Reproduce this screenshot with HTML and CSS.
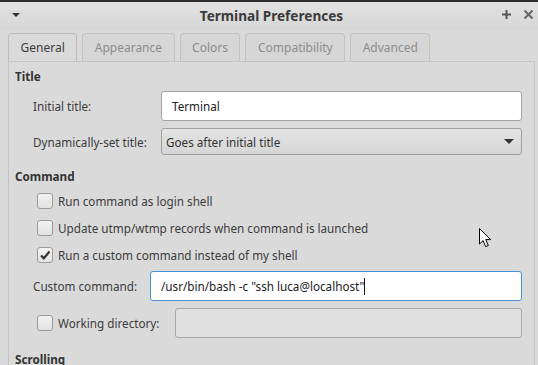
FILE: index.html
```html
<!DOCTYPE html>
<html lang="en">
	<head>
		<meta charset="UTF-8" />
		<title>Terminal Preferences</title>
		<link rel="stylesheet" href="styles.css">
	</head>

	<body>
		<div class="window">
			<!-- Title bar -->
			<div class="titlebar">
				<span class="menu-arrow"></span>
				<span class="title">Terminal Preferences</span>
				<div class="wm-buttons">
					<svg width="11" height="11" viewBox="0 0 11 11"><path d="M5.5 1v9M1 5.5h9" stroke="#555" stroke-width="2"/></svg>
					<svg width="11" height="11" viewBox="0 0 11 11"><path d="M1.5 1.5l8 8M9.5 1.5l-8 8" stroke="#666" stroke-width="2"/></svg>
				</div>
			</div>

			<div class="tabs">
				<div class="tab active">General</div>
				<div class="tab">Appearance</div>
				<div class="tab">Colors</div>
				<div class="tab">Compatibility</div>
				<div class="tab">Advanced</div>
			</div>

			<div class="panel">
				<div class="heading">Title</div>
				<div class="row">
					<label class="label wide">Initial title:</label>
					<div class="entry">Terminal</div>
				</div>
				<div class="row">
					<label class="label wide">Dynamically-set title:</label>
					<div class="combo">
						<span>Goes after initial title</span>
						<span class="combo-arrow"></span>
					</div>
				</div>

				<div class="heading">Command</div>
				<div class="check-row">
					<span class="checkbox"></span>
					<span>Run command as login shell</span>
				</div>
				<div class="check-row">
					<span class="checkbox"></span>
					<span>Update utmp/wtmp records when command is launched</span>
				</div>
				<div class="check-row">
					<span class="checkbox checked">
						<svg width="12" height="12" viewBox="0 0 12 12"><path d="M2 6.5l2.8 2.8L10.5 2.5" fill="none" stroke="#333" stroke-width="2.2"/></svg>
					</span>
					<span>Run a custom command instead of my shell</span>
				</div>
				<div class="row">
					<label class="label">Custom command:</label>
					<div class="entry focused">/usr/bin/bash -c "ssh luca@localhost"<span class="caret"></span></div>
				</div>
				<div class="row">
					<div class="check-label">
						<span class="checkbox"></span>
						<span>Working directory:</span>
					</div>
					<div class="entry disabled"></div>
				</div>

				<div class="heading">Scrolling</div>
			</div>

			<!-- mouse pointer -->
			<svg class="pointer" width="13" height="20" viewBox="0 0 13 20">
				<path d="M0.5 0.5v15.5l3.6-3.4 2.6 6 2.6-1.1-2.6-5.9h5z" fill="#fff" stroke="#000" stroke-width="1"/>
			</svg>
		</div>
	</body>
</html>
```

FILE: styles.css
```css
body {
	margin: 0;
	font-family: "Noto Sans", sans-serif;
	font-size: 11.7px;
	color: #3c3c3c;
	background-color: #dadada;
}

.window {
	position: relative;
	width: 538px;
	height: 365px;
	overflow: hidden;
	border-top: 2px solid #2e2e2e;
	box-sizing: border-box;
}

.titlebar {
	height: 28px;
	display: flex;
	align-items: center;
	position: relative;
	background: linear-gradient(#e2e2e2, #d6d6d6);
	padding: 0 4px 0 12px;
}

.menu-arrow {
	width: 0;
	height: 0;
	border-left: 4px solid transparent;
	border-right: 4px solid transparent;
	border-top: 4px solid #333;
	margin-top: -2px;
}

.title {
	flex: 1;
	text-align: center;
	font-size: 13.6px;
	font-weight: bold;
	color: #3a3a3a;
	margin-left: 22px;
	margin-top: -2px;
}

.wm-buttons {
	display: flex;
	gap: 11px;
	margin-top: -4px;
}

/* Notebook tabs */
.tabs {
	display: flex;
	gap: 5px;
	padding-left: 8px;
	margin-top: 3px;
}

.tab {
	height: 27px;
	line-height: 27px;
	padding: 0 11.5px;
	border: 1px solid #c2c2c2;
	border-bottom: none;
	border-radius: 4px 4px 0 0;
	color: #8c8c8c;
	background-color: #d6d6d6;
	font-size: 12px;
}

.tab.active {
	color: #3c3c3c;
	background-color: #dadada;
	border-color: #bdbdbd;
}

.panel {
	margin: 0 3px 0 8px;
	border: 1px solid #c4c4c4;
	border-bottom: none;
	padding: 5px 12px 0 6px;
	height: 320px;
}

.heading {
	font-weight: bold;
	line-height: 18px;
	color: #333;
}

.row {
	display: flex;
	align-items: center;
	margin-top: 6px;
}

.row + .row {
	margin-top: 7px;
}

.heading + .row {
	margin-top: 6px;
}

.label {
	padding-left: 18px;
	width: 117px;
}

.label.wide {
	width: 128px;
}

.entry {
	flex: 1;
	height: 28px;
	line-height: 28px;
	background-color: #fff;
	border: 1px solid #a3a3a3;
	border-radius: 3px;
	padding: 0 10px;
	color: #222;
}

.entry.focused {
	border-color: #4a90d9;
}

.entry.disabled {
	background-color: #e0e0e0;
	border-color: #a8a8a8;
}

.caret {
	display: inline-block;
	width: 1px;
	height: 17px;
	background-color: #111;
	vertical-align: -4px;
}

.combo {
	flex: 1;
	height: 25px;
	display: flex;
	align-items: center;
	justify-content: space-between;
	padding: 0 7px 0 4px;
	border: 1px solid #9e9e9e;
	border-radius: 3px;
	background: linear-gradient(#e4e4e4, #d6d6d6);
	color: #333;
}

.combo-arrow {
	width: 0;
	height: 0;
	border-left: 5px solid transparent;
	border-right: 5px solid transparent;
	border-top: 5px solid #333;
}

.row + .heading {
	margin-top: 12px;
}

.check-row {
	display: flex;
	align-items: center;
	gap: 5px;
	height: 27px;
	padding-left: 22px;
}

.heading + .check-row {
	margin-top: 2px;
}

.check-row + .row {
	margin-top: 3px;
}

.check-label {
	display: flex;
	align-items: center;
	gap: 5px;
	width: 138px;
	padding-left: 22px;
}

.checkbox {
	width: 14px;
	height: 14px;
	border: 1px solid #9a9a9a;
	border-radius: 3px;
	background: linear-gradient(#f2f2f2, #e2e2e2);
	display: flex;
	align-items: center;
	justify-content: center;
}

.pointer {
	position: absolute;
	left: 479px;
	top: 226px;
}
```
